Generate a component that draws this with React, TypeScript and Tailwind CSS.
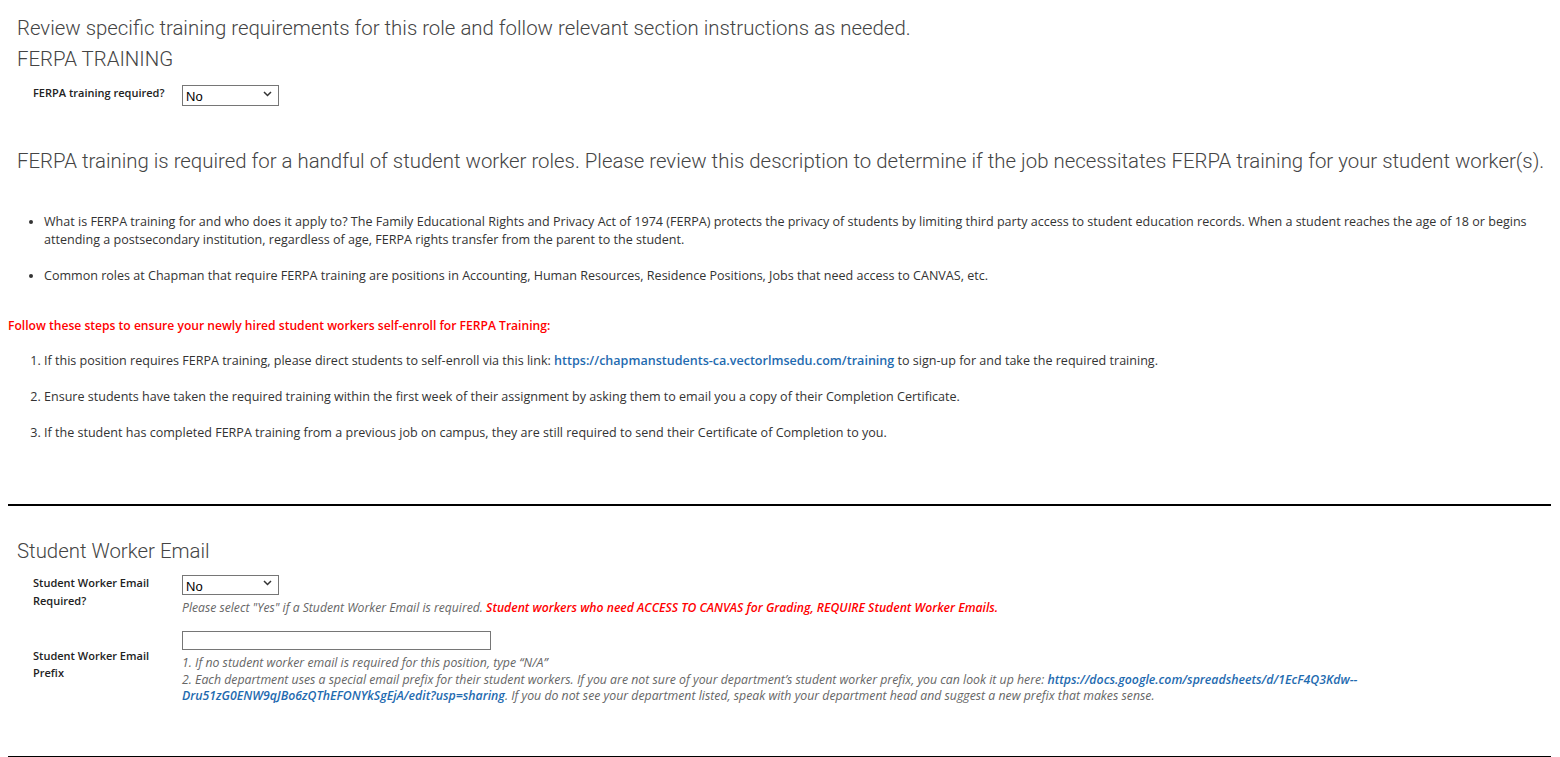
import React from "react";

const headFont = { fontFamily: "Roboto, 'Liberation Sans', sans-serif" };

function Chevron() {
  return (
    <svg className="pointer-events-none absolute right-[7px] top-1/2 -translate-y-1/2" width="9" height="6" viewBox="0 0 9 6" fill="none">
      <path d="M1 1 L4.5 4.5 L8 1" stroke="#333" strokeWidth="1.5" />
    </svg>
  );
}

function NoSelect({ h }: { h: string }) {
  return (
    <div className={`relative w-[97px] ${h}`}>
      <select
        defaultValue="No"
        className={`w-full ${h} appearance-none border border-[#767676] bg-white pl-[3px] pt-[3px] text-[13px] leading-none text-black outline-none`}
        style={{ fontFamily: "'Liberation Sans', Arial, sans-serif" }}
      >
        <option>No</option>
        <option>Yes</option>
      </select>
      <Chevron />
    </div>
  );
}

export default function App() {
  return (
    <div
      className="min-h-screen bg-white pl-2 pr-[9px] pt-[13px] text-[#333]"
      style={{ fontFamily: "'Open Sans', 'Liberation Sans', sans-serif" }}
    >
      <h2 className="pl-[9px] text-[20.4px] font-light leading-[31px] text-[#444]" style={headFont}>
        Review specific training requirements for this role and follow relevant section instructions as needed.
      </h2>
      <h2 className="pl-[9px] text-[20.4px] font-light leading-[31px] text-[#444]" style={headFont}>
        FERPA TRAINING
      </h2>

      <div className="mt-[8px] grid grid-cols-[149px_1fr] items-center pl-[25px]">
        <label className="text-[11px] font-semibold text-[#222]">FERPA training required?</label>
        <NoSelect h="h-[21px]" />
      </div>

      <h3 className="mt-[43px] pl-[9px] text-[20.4px] font-light leading-[28px] text-[#444]" style={headFont}>
        FERPA training is required for a handful of student worker roles. Please review this description to determine if the job necessitates FERPA training for your student worker(s).
      </h3>

      <ul className="mt-[38px] flex list-disc flex-col gap-[18px] pl-[36px] pr-[12px] text-[12.55px] leading-[18px]">
        <li>
          What is FERPA training for and who does it apply to? The Family Educational Rights and Privacy Act of 1974 (FERPA) protects the privacy of students by limiting third party access to student education records. When a student reaches the age of 18 or begins attending a postsecondary institution, regardless of age, FERPA rights transfer from the parent to the student.
        </li>
        <li>
          Common roles at Chapman that require FERPA training are positions in Accounting, Human Resources, Residence Positions, Jobs that need access to CANVAS, etc.
        </li>
      </ul>

      <p className="mt-[32px] text-[12.1px] font-semibold leading-[18px] text-[#ff0000]">
        Follow these steps to ensure your newly hired student workers self-enroll for FERPA Training:
      </p>

      <ol className="mt-[17px] flex list-decimal flex-col gap-[18px] pl-[36px] text-[12.55px] leading-[18px]">
        <li>
          If this position requires FERPA training, please direct students to self-enroll via this link:{" "}
          <a className="font-semibold text-[#1f6bb0]" href="#">
            https://chapmanstudents-ca.vectorlmsedu.com/training
          </a>{" "}
          to sign-up for and take the required training.
        </li>
        <li>
          Ensure students have taken the required training within the first week of their assignment by asking them to email you a copy of their Completion Certificate.
        </li>
        <li>
          If the student has completed FERPA training from a previous job on campus, they are still required to send their Certificate of Completion to you.
        </li>
      </ol>

      <hr className="mt-[62px] h-[2px] border-0 bg-black" />

      <h2 className="mt-[30px] pl-[9px] text-[20.4px] font-light leading-[31px] text-[#444]" style={headFont}>
        Student Worker Email
      </h2>

      <div className="mt-[4px] grid grid-cols-[149px_1fr] items-center gap-y-[15px] pl-[25px]">
        <label className="w-[125px] pb-[4px] text-[11px] font-semibold leading-[18px] text-[#222]">
          Student Worker Email Required?
        </label>
        <div className="pt-[2px]">
          <NoSelect h="h-[20px]" />
          <p className="mt-[6px] text-[12.2px] italic leading-[17px] text-[#666]">
            Please select "Yes" if a Student Worker Email is required.{" "}
            <span className="font-semibold text-[#ff0000]">
              Student workers who need ACCESS TO CANVAS for Grading, REQUIRE Student Worker Emails.
            </span>
          </p>
        </div>

        <label className="w-[125px] pb-[8px] text-[11px] font-semibold leading-[17px] text-[#222]">
          Student Worker Email Prefix
        </label>
        <div>
          <input type="text" className="block h-[19px] w-[309px] border border-[#767676] bg-white outline-none" />
          <div className="mt-[5px] text-[12.3px] italic leading-[16.6px] text-[#666]">
            <p>1. If no student worker email is required for this position, type “N/A”</p>
            <p>
              2. Each department uses a special email prefix for their student workers. If you are not sure of your department’s student worker prefix, you can look it up here:{" "}
              <a className="font-semibold text-[#1f6bb0]" href="#">
                https://docs.google.com/spreadsheets/d/1EcF4Q3Kdw--Dru51zG0ENW9qJBo6zQThEFONYkSgEjA/edit?usp=sharing
              </a>
              . If you do not see your department listed, speak with your department head and suggest a new prefix that makes sense.
            </p>
          </div>
        </div>
      </div>

      <hr className="mt-[51px] h-px border-0 bg-black" />
    </div>
  );
}
